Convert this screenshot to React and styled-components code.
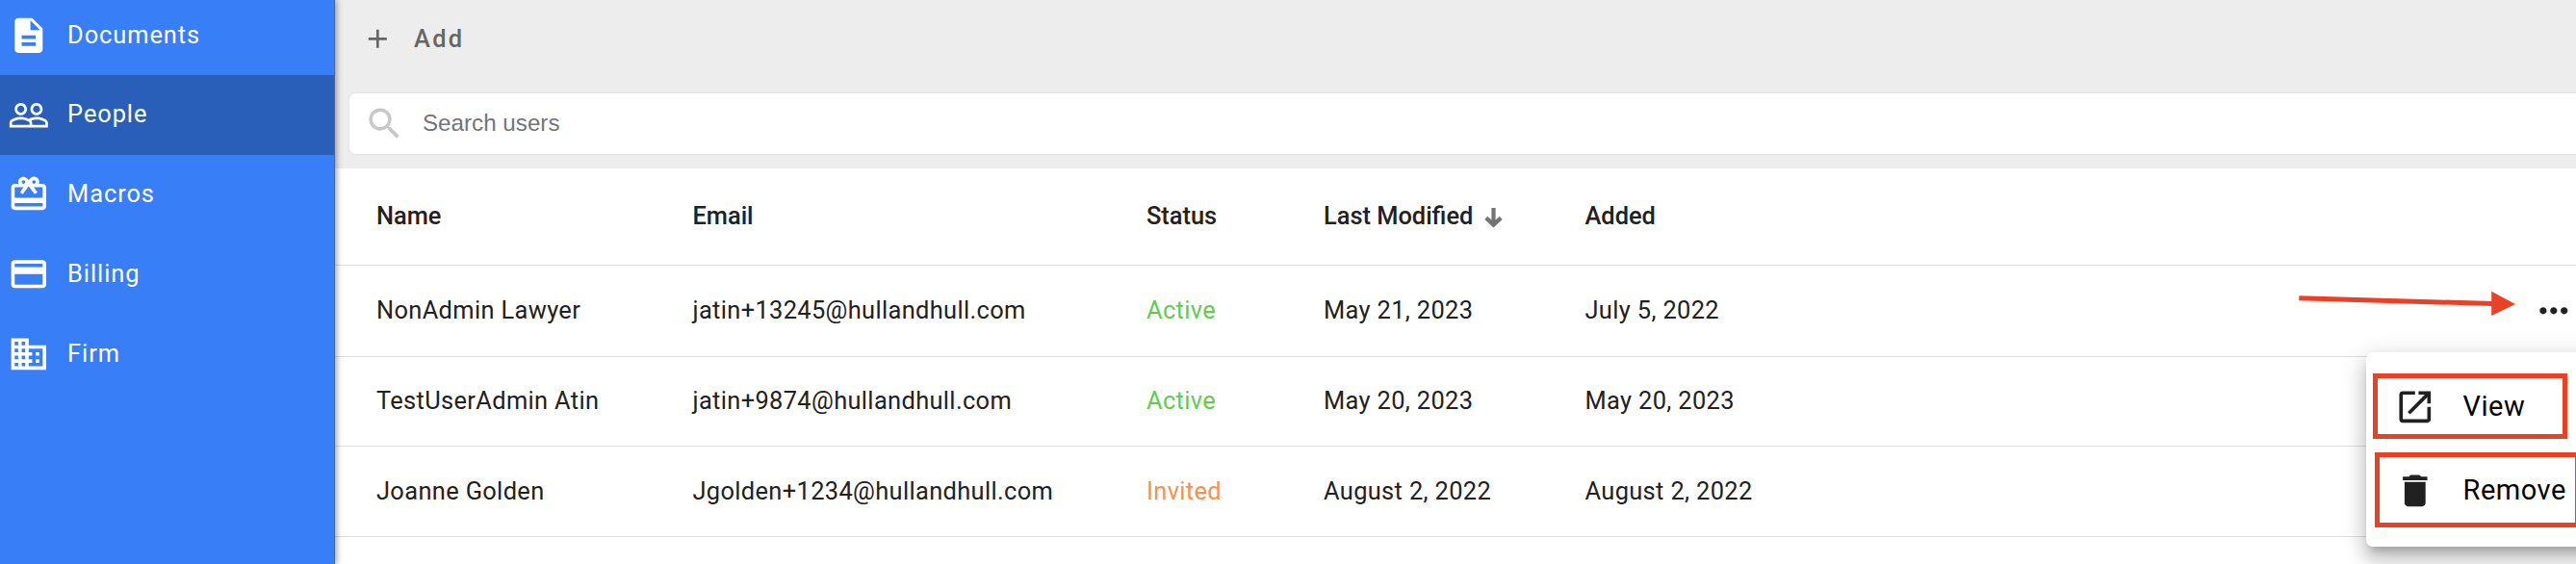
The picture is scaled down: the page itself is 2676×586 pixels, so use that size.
import React from 'react';
import styled, { createGlobalStyle } from 'styled-components';
import {
  MdAdd,
  MdBusiness,
  MdCardGiftcard,
  MdCreditCard,
  MdDelete,
  MdDescription,
  MdMoreHoriz,
  MdOpenInNew,
  MdPeopleOutline,
  MdSearch,
} from 'react-icons/md';

const GlobalStyle = createGlobalStyle`
  * {
    box-sizing: border-box;
  }

  body {
    margin: 0;
    overflow: hidden;
    font-family: Roboto, sans-serif;
    font-size: 25.4px;
    color: #212121;
    background-color: #fff;
  }
`;

const Layout = styled.div`
  position: relative;
  display: flex;
  width: 100%;
  height: 586px;
  overflow: hidden;
`;

const Sidebar = styled.nav`
  position: relative;
  z-index: 1;
  flex: 0 0 348px;
  padding-top: 78px;
  border-right: 1px solid #3069d1;
  background-color: #387ef7;
  box-shadow: 0 0 7px 1px rgba(0, 0, 0, 0.45);
`;

const NavItem = styled.a`
  display: flex;
  align-items: center;
  height: 82.8px;
  padding-left: 7.5px;
  color: #fff;
  letter-spacing: 0.93px;
  background-color: ${p => (p.$active ? '#295fb9' : 'transparent')};

  :first-child& {
    margin-top: -83px;
    height: 83px;
  }

  svg {
    flex: none;
    width: 43.6px;
    height: 43.6px;
    margin-right: 19px;
  }
`;

/* lifts the text a pixel above the centre of its icon */
const Label = styled.span`
  padding-bottom: 2px;
`;

const Main = styled.main`
  flex: 1;
  min-width: 0;
`;

const TopBar = styled.header`
  height: 175px;
  padding-left: 14px;
  background-color: #ededed;
`;

const AddButton = styled.button`
  display: flex;
  align-items: center;
  height: 96px;
  padding: 0 0 15px 14px;
  border: 0;
  background: none;
  color: #666;
  font: inherit;
  font-weight: 500;
  letter-spacing: 2.2px;

  svg {
    width: 32.6px;
    height: 32.6px;
    margin-right: 21.5px;
  }
`;

const SearchBox = styled.label`
  display: flex;
  align-items: center;
  height: 65px;
  padding-left: 14.6px;
  border: 1px solid #e5e5e5;
  border-right: 0;
  border-radius: 7px 0 0 7px;
  background-color: #fff;

  svg {
    flex: none;
    width: 43px;
    height: 43px;
    color: #c8c8c8;
  }

  input {
    flex: 1;
    padding: 0 0 2px 18.4px;
    border: 0;
    outline: none;
    font-family: "Liberation Sans", sans-serif;
    font-size: 24.2px;
    background: transparent;
    ::placeholder {
      color: #757575;
      opacity: 1;
    }
  }
`;

const Row = styled.div`
  display: grid;
  grid-template-columns: 328.5px 471.5px 184px 271.5px 1fr 44px;
  align-items: center;
  height: ${p => p.$height}px;
  padding: 0 0.7px 2px 43px;
  border-bottom: 1px solid #dedede;
  letter-spacing: 0.36px;
  white-space: nowrap;
`;

const HeaderRow = styled(Row)`
  font-weight: 500;
  letter-spacing: 0;
`;

const SortCell = styled.div`
  display: flex;
  align-items: center;

  svg {
    width: 19px;
    height: 21px;
    margin: 4px 0 0 11.5px;
    fill: #757575;
  }
`;

const Status = styled.div`
  color: ${p => (p.$invited ? '#f4924e' : '#62cb4d')};
`;

const MoreButton = styled.button`
  display: flex;
  padding: 1px 0 0;
  border: 0;
  background: none;
  color: #212121;

  svg {
    width: 43.6px;
    height: 43.6px;
  }
`;

const Menu = styled.div`
  position: absolute;
  z-index: 2;
  top: 366px;
  left: 2458px;
  width: 260px;
  height: 202px;
  padding-top: 14px;
  border-radius: 7px;
  background-color: #fff;
  box-shadow:
    0 9px 9px -5px rgba(0, 0, 0, 0.2),
    0 14.5px 18px 2px rgba(0, 0, 0, 0.14),
    0 5px 25px 4px rgba(0, 0, 0, 0.12);
`;

const MenuItem = styled.div`
  display: flex;
  align-items: center;
  height: 86.5px;
  padding-left: 28.8px;
  color: #000;
  font-size: 29px;
  letter-spacing: 0.5px;

  svg {
    width: 43.6px;
    height: 43.6px;
    margin-right: 28.2px;
    color: #212121;
  }
`;

const Highlight = styled.div`
  position: absolute;
  z-index: 3;
  top: ${p => p.$top}px;
  left: ${p => p.$left}px;
  width: ${p => p.$width}px;
  height: ${p => p.$height}px;
  border: 5px solid #ea4025;
`;

const Pointer = styled.svg`
  position: absolute;
  z-index: 3;
  top: 300px;
  left: 2385px;
  width: 230px;
  height: 30px;
`;

const navItems = [
  { label: 'Documents', Icon: MdDescription },
  { label: 'People', Icon: MdPeopleOutline, active: true },
  { label: 'Macros', Icon: MdCardGiftcard },
  { label: 'Billing', Icon: MdCreditCard },
  { label: 'Firm', Icon: MdBusiness },
];

const users = [
  {
    name: 'NonAdmin Lawyer',
    email: 'jatin+13245@hullandhull.com',
    status: 'Active',
    modified: 'May 21, 2023',
    added: 'July 5, 2022',
    height: 95,
    hasMore: true,
  },
  {
    name: 'TestUserAdmin Atin',
    email: 'jatin+9874@hullandhull.com',
    status: 'Active',
    modified: 'May 20, 2023',
    added: 'May 20, 2023',
    height: 93,
  },
  {
    name: 'Joanne Golden',
    email: 'Jgolden+1234@hullandhull.com',
    status: 'Invited',
    modified: 'August 2, 2022',
    added: 'August 2, 2022',
    height: 94,
  },
];

const App = () => (
  <Layout>
    <GlobalStyle />
    <Sidebar>
      {navItems.map(({ label, Icon, active }) => (
        <NavItem key={label} $active={active}>
          <Icon />
          <Label>{label}</Label>
        </NavItem>
      ))}
    </Sidebar>
    <Main>
      <TopBar>
        <AddButton>
          <MdAdd />
          <Label>Add</Label>
        </AddButton>
        <SearchBox>
          <MdSearch />
          <input type="text" placeholder="Search users" />
        </SearchBox>
      </TopBar>
      <HeaderRow $height={101}>
        <div>Name</div>
        <div>Email</div>
        <div>Status</div>
        <SortCell>
          Last Modified
          <svg viewBox="0 0 19 21">
            <path d="M7.4 0h4.2v12.6l4.2-3.8 2.9 3.2-9.2 8.6-9.2-8.6 2.9-3.2 4.2 3.8z" />
          </svg>
        </SortCell>
        <div>Added</div>
      </HeaderRow>
      {users.map(user => (
        <Row key={user.email} $height={user.height}>
          <div>{user.name}</div>
          <div>{user.email}</div>
          <Status $invited={user.status === 'Invited'}>{user.status}</Status>
          <div>{user.modified}</div>
          <div>{user.added}</div>
          {user.hasMore && (
            <MoreButton>
              <MdMoreHoriz />
            </MoreButton>
          )}
        </Row>
      ))}
    </Main>
    <Menu>
      <MenuItem>
        <MdOpenInNew />
        <Label>View</Label>
      </MenuItem>
      <MenuItem>
        <MdDelete />
        <Label>Remove</Label>
      </MenuItem>
    </Menu>
    <Highlight $top={388} $left={2465} $width={202} $height={68} />
    <Highlight $top={470} $left={2467} $width={213} $height={78} />
    <Pointer viewBox="0 0 230 30">
      <line x1="3.3" y1="9.8" x2="205" y2="15.5" stroke="#ea4025" strokeWidth="5" />
      <path d="M203.2 2.8v25.2l24.8-12z" fill="#ea4025" />
    </Pointer>
  </Layout>
);

export default App;
